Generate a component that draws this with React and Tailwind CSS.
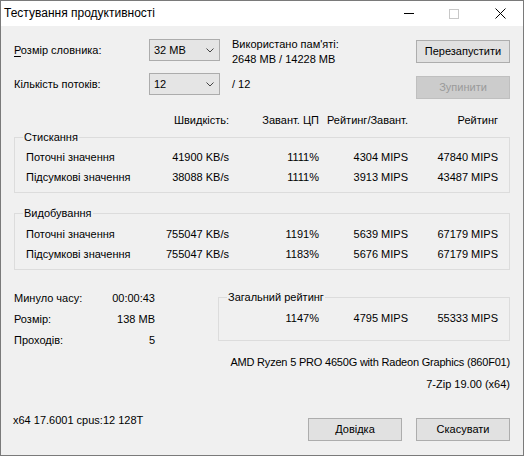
import React from 'react';

const font = { fontFamily: '"Liberation Sans", Arial, sans-serif' };

const Btn = ({ children, disabled, className = '' }) => (
    <div
        className={`w-[94px] h-[23px] flex items-center justify-center border ${
            disabled
                ? 'bg-[#cccccc] border-[#bfbfbf] text-[#9a9a9a]'
                : 'bg-[#e1e1e1] border-[#adadad] text-black'
        } ${className}`}
    >
        {children}
    </div>
);

const Select = ({ value }) => (
    <div className="w-[71px] h-[22px] flex items-center justify-between bg-[#e5e5e5] border border-[#acacac] pl-[4px] pr-[4px]">
        <span>{value}</span>
        <svg width="8" height="5" viewBox="0 0 8 5" className="mr-[1px]">
            <path d="M0.5 0.5 L4 4 L7.5 0.5" fill="none" stroke="#444" strokeWidth="1" />
        </svg>
    </div>
);

// columns: label | speed | usage | rating/usage | rating
const cols = 'grid grid-cols-[113px_90px_90px_89px_90px] whitespace-nowrap';

const Row = ({ label, speed, usage, ru, rating }) => (
    <div className={`${cols} h-[20px] items-center`}>
        <span>{label}</span>
        <span className="text-right">{speed}</span>
        <span className="text-right">{usage}</span>
        <span className="text-right">{ru}</span>
        <span className="text-right">{rating}</span>
    </div>
);

const Group = ({ title, rows, className = '', pad = 'pt-[2px]' }) => (
    <fieldset className={`border border-[#dcdcdc] ml-[1px] ${className}`}>
        <legend className="ml-[8px] px-[1px] leading-[15px]">{title}</legend>
        <div className={`pl-[11px] pb-[5px] ${pad}`}>
            {rows.map((r) => (
                <Row key={r.label} {...r} />
            ))}
        </div>
    </fieldset>
);

const App = () => {
    const compress = [
        { label: 'Поточні значення', speed: '41900 KB/s', usage: '1111%', ru: '4304 MIPS', rating: '47840 MIPS' },
        { label: 'Підсумкові значення', speed: '38088 KB/s', usage: '1111%', ru: '3913 MIPS', rating: '43487 MIPS' }
    ];
    const extract = [
        { label: 'Поточні значення', speed: '755047 KB/s', usage: '1191%', ru: '5639 MIPS', rating: '67179 MIPS' },
        { label: 'Підсумкові значення', speed: '755047 KB/s', usage: '1183%', ru: '5676 MIPS', rating: '67179 MIPS' }
    ];

    return (
        <div style={font} className="w-[524px] h-[456px] border border-[#7a7a7a] flex flex-col text-[11px] text-black leading-[15px] whitespace-nowrap">
            {/* Title bar */}
            <div className="h-[25px] bg-white flex items-center pl-[3px] shrink-0">
                <span className="flex-1 text-[12px]">Тестування продуктивності</span>
                <div className="flex items-center">
                    <div className="w-[46px] flex justify-center pl-[2px]">
                        <svg width="10" height="10" viewBox="0 0 10 10">
                            <path d="M0 4.5 H10" stroke="#000" strokeWidth="1" />
                        </svg>
                    </div>
                    <div className="w-[46px] flex justify-center">
                        <svg width="10" height="10" viewBox="0 0 10 10">
                            <rect x="0.5" y="0.5" width="9" height="9" fill="none" stroke="#c8c8c8" strokeWidth="1" />
                        </svg>
                    </div>
                    <div className="w-[46px] flex justify-center">
                        <svg width="11" height="11" viewBox="0 0 11 11">
                            <path d="M0.5 0.5 L10.5 10.5 M10.5 0.5 L0.5 10.5" stroke="#000" strokeWidth="1" />
                        </svg>
                    </div>
                </div>
            </div>

            {/* Body */}
            <div className="flex-1 bg-[#f0f0f0] pl-[12px] pr-[13px] flex flex-col">
                {/* Settings */}
                <div className="flex pt-[13px]">
                    <div className="flex-1 flex flex-col">
                        <div className="flex h-[22px] items-center">
                            <span className="w-[136px] pl-[1px]">
                                <span className="underline underline-offset-2">Р</span>озмір словника:
                            </span>
                            <Select value="32 MB" />
                            <div className="ml-[12px] self-start -mt-[2px]">
                                <div>Використано пам'яті:</div>
                                <div>2648 MB / 14228 MB</div>
                            </div>
                        </div>
                        <div className="flex h-[22px] items-center mt-[12px]">
                            <span className="w-[136px] pl-[1px]">Кількість потоків:</span>
                            <Select value="12" />
                            <span className="ml-[12px]">/ 12</span>
                        </div>
                    </div>
                    <div className="flex flex-col gap-[13px] pt-[1px]">
                        <Btn>Перезапустити</Btn>
                        <Btn disabled>Зупинити</Btn>
                    </div>
                </div>

                {/* Header */}
                <div className={`${cols} mt-[14px] pl-[13px]`}>
                    <span />
                    <span className="text-right">Швидкість:</span>
                    <span className="text-right">Завант. ЦП</span>
                    <span className="text-right">Рейтинг/Завант.</span>
                    <span className="text-right">Рейтинг</span>
                </div>

                <Group title="Стискання" rows={compress} className="mt-[2px]" />
                <Group title="Видобування" rows={extract} className="mt-[13px]" pad="pt-[3px]" />

                {/* Totals */}
                <div className="flex mt-[18px]">
                    <div className="w-[141px] ml-[1px] flex flex-col">
                        <div className="h-[21px] flex items-center justify-between">
                            <span>Минуло часу:</span>
                            <span>00:00:43</span>
                        </div>
                        <div className="h-[21px] flex items-center justify-between">
                            <span>Розмір:</span>
                            <span>138 MB</span>
                        </div>
                        <div className="h-[21px] flex items-center justify-between">
                            <span>Проходів:</span>
                            <span>5</span>
                        </div>
                    </div>
                    <div className="flex-1 ml-[63px] flex flex-col">
                        <fieldset className="border border-[#dcdcdc] mt-[2px]">
                            <legend className="ml-[8px] px-[1px] leading-[15px]">Загальний рейтинг</legend>
                            <div className="grid grid-cols-[100px_89px_90px] pt-[3px] pb-[12px] h-[35px] items-center">
                                <span className="text-right">1147%</span>
                                <span className="text-right">4795 MIPS</span>
                                <span className="text-right">55333 MIPS</span>
                            </div>
                        </fieldset>
                        <div className="text-right mt-[14px] tracking-[-0.2px]">AMD Ryzen 5 PRO 4650G with Radeon Graphics (860F01)</div>
                        <div className="text-right mt-[7px]">7-Zip 19.00 (x64)</div>
                    </div>
                </div>

                {/* Footer */}
                <div className="flex items-start mt-[20px]">
                    <span className="flex-1 leading-[16px]">x64 17.6001 cpus:12 128T</span>
                    <div className="flex gap-[14px] mt-[6px]">
                        <Btn>Довідка</Btn>
                        <Btn>Скасувати</Btn>
                    </div>
                </div>
            </div>
        </div>
    );
};

export default App;
